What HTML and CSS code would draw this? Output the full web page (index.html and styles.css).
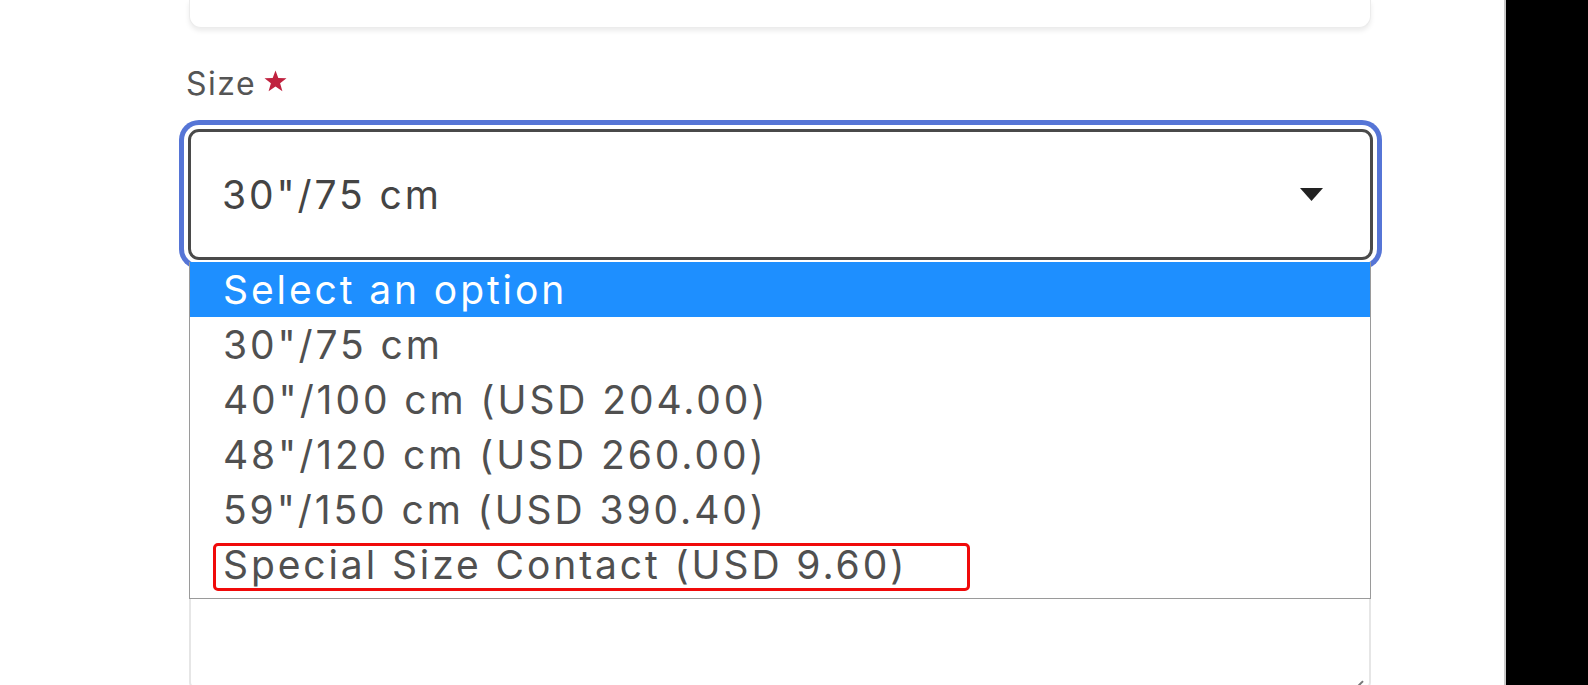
FILE: index.html
```html
<!DOCTYPE html>
<html lang="en">
<head>
<meta charset="utf-8">
<title>Size select</title>
<link rel="stylesheet" href="styles.css">
</head>
<body>
<div class="page">
  <main class="main">
    <div class="form">
      <div class="card"></div>
      <label class="label">Size<svg class="req" width="25" height="22" viewBox="0 0 24 22"><path d="M12 0.5 L14.8 8 L23 8.2 L16.6 13.2 L18.9 21.3 L12 16.6 L5.1 21.3 L7.4 13.2 L1 8.2 L9.2 8 Z" fill="#c0223f"/></svg></label>
      <div class="field">
        <div class="select">
          <span class="value">30"/75 cm</span>
          <svg class="arrow" width="25" height="15" viewBox="0 0 25 15"><path d="M1 1 L24 1 L12.5 14 Z" fill="#222"/></svg>
        </div>
        <ul class="list">
          <li class="opt active">Select an option</li>
          <li class="opt">30"/75 cm</li>
          <li class="opt">40"/100 cm (USD 204.00)</li>
          <li class="opt">48"/120 cm (USD 260.00)</li>
          <li class="opt">59"/150 cm (USD 390.40)</li>
          <li class="opt marked">Special Size Contact (USD 9.60)</li>
        </ul>
        <div class="textarea"><span class="grip"></span></div>
      </div>
    </div>
  </main>
  <aside class="side"></aside>
</div>
</body>
</html>
```
FILE: styles.css
```css
html, body {
  margin: 0;
  padding: 0;
  background: #fff;
}
body {
  font-family: "Inter", "Liberation Sans", sans-serif;
}
.page {
  display: flex;
  height: 685px;
  overflow: hidden;
}
.main {
  flex: 1;
  background: #fff;
  border-right: 2px solid #c8c8c8;
  overflow: hidden;
}
.side {
  width: 82px;
  background: #000;
}
.form {
  margin-left: 189px;
  width: 1182px;
}
.card {
  height: 27px;
  border: 1px solid #ececec;
  border-top: none;
  border-radius: 0 0 12px 12px;
  box-shadow: 0 3px 5px rgba(0,0,0,0.08);
  background: #fff;
}
.label {
  display: flex;
  align-items: flex-start;
  margin-top: 38px;
  height: 36px;
  font-size: 32px;
  letter-spacing: 1.5px;
  color: #555;
  margin-left: -3px;
  line-height: 36px;
}
.req {
  display: block;
  margin-left: 7px;
  margin-top: 4px;
}
.field {
  position: relative;
  margin-top: 27px;
}
.select {
  box-sizing: border-box;
  height: 131px;
  margin-left: -1px;
  width: 1185px;
  border: 3px solid #4a4a4a;
  border-radius: 11px;
  box-shadow: 0 0 0 4px #fff, 0 0 0 9px #5675d6;
  display: flex;
  align-items: center;
  justify-content: space-between;
  padding: 0 46px 0 31px;
  background: #fff;
}
.value {
  font-size: 39px;
  letter-spacing: 2.9px;
  color: #444;
}
.arrow {
  display: block;
}
.textarea {
  box-sizing: border-box;
  height: 418px;
  margin-top: 12px;
  border: 2px solid #e6e6e6;
  border-radius: 8px;
  position: relative;
}
.grip {
  position: absolute;
  right: 7px;
  bottom: 2px;
  width: 8px;
  height: 9px;
  border-right: 2px solid #777;
  transform: rotate(45deg);
}
.list {
  position: absolute;
  top: 133px;
  left: 0;
  width: 1182px;
  box-sizing: border-box;
  margin: 0;
  padding: 0 0 6px;
  list-style: none;
  background: #fff;
  border: 1px solid #9a9a9a;
  border-top: none;
  z-index: 2;
}
.opt {
  height: 55px;
  line-height: 55px;
  padding-left: 33px;
  font-size: 39px;
  letter-spacing: 2.9px;
  color: #505050;
  white-space: nowrap;
  position: relative;
}
.opt.active {
  background: #1e8fff;
  color: #fff;
}
.marked::before {
  content: "";
  position: absolute;
  left: 23px;
  width: 757px;
  top: 6px;
  height: 48px;
  box-sizing: border-box;
  border: 3px solid #f00a0a;
  border-radius: 5px;
}
```
